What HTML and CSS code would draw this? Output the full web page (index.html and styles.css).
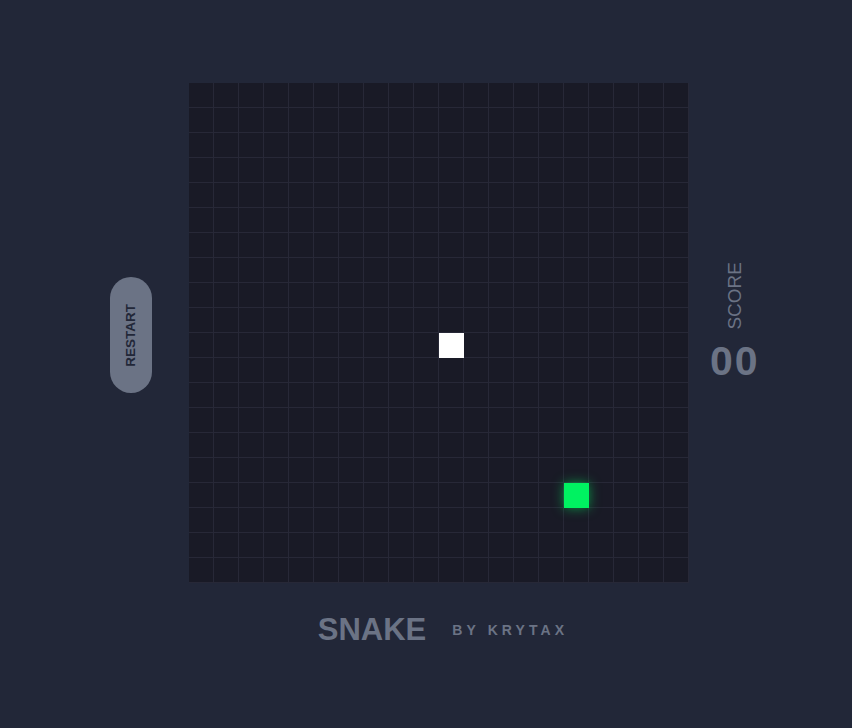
FILE: index.html
```html
<!DOCTYPE html>
<html lang="en">
<head>
    <meta charset="UTF-8">
    <meta name="viewport" content="width=device-width, initial-scale=1.0">
    <title>Snake</title>
    <link rel="stylesheet" href="styles.css">
</head>
<body>
    <main class="game">
        <button class="restart-btn"><span>RESTART</span></button>

        <div class="board">
            <div class="snake"></div>
            <div class="food"></div>
        </div>

        <div class="score">
            <span class="score-label">SCORE</span>
            <span class="score-value">00</span>
        </div>
    </main>

    <footer class="title">
        <span class="title-name">SNAKE</span>
        <span class="title-by">BY KRYTAX</span>
    </footer>
</body>
</html>
```

FILE: styles.css
```css
body {
    font-family: "Liberation Sans", Arial, sans-serif;
    background-color: #222738;
    margin: 0;
    padding: 83px 0 0 0;
    color: #6b7385;
}

.game {
    display: flex;
    align-items: center;
    padding-left: 110px;
}

/* restart pill, text reads bottom to top */
.restart-btn {
    width: 42px;
    height: 116px;
    margin-top: 4px;
    border: none;
    border-radius: 21px;
    background: #6b7385;
    color: #222738;
    padding: 0;
    display: flex;
    align-items: center;
    justify-content: center;
    cursor: pointer;
}

.restart-btn span {
    writing-mode: vertical-rl;
    transform: rotate(180deg);
    font-family: "Liberation Sans", Arial, sans-serif;
    font-weight: bold;
    font-size: 13.5px;
    line-height: 1;
}

/* 20 x 20 cells, 25px each */
.board {
    margin-left: 37px;
    width: 500px;
    height: 500px;
    display: grid;
    grid-template-columns: repeat(20, 25px);
    grid-template-rows: repeat(20, 25px);
    background-color: #191a26;
    background-image:
        linear-gradient(to right, transparent 24px, #272837 24px),
        linear-gradient(to bottom, transparent 24px, #272837 24px);
    background-size: 25px 25px;
}

.snake {
    grid-column: 11;
    grid-row: 11;
    background: #ffffff;
}

.food {
    grid-column: 16;
    grid-row: 17;
    background: #00f261;
    box-shadow: 0 0 12px rgba(0, 242, 97, 0.55);
}

.score {
    margin-left: 21px;
    margin-bottom: 22px;
    display: flex;
    flex-direction: column;
    align-items: center;
    gap: 11px;
}

.score-label {
    writing-mode: vertical-rl;
    transform: rotate(180deg);
    font-size: 19px;
    line-height: 1;
}

.score-value {
    font-size: 41px;
    font-weight: bold;
    line-height: 1;
    letter-spacing: 2px;
}

.title {
    margin-left: 189px;
    width: 500px;
    padding-left: 4px;
    margin-top: 31px;
    display: flex;
    justify-content: center;
    align-items: center;
    gap: 26px;
}

.title-name {
    font-size: 31px;
    font-weight: bold;
    line-height: 1;
}

.title-by {
    font-size: 14px;
    font-weight: bold;
    letter-spacing: 4.1px;
}
```
